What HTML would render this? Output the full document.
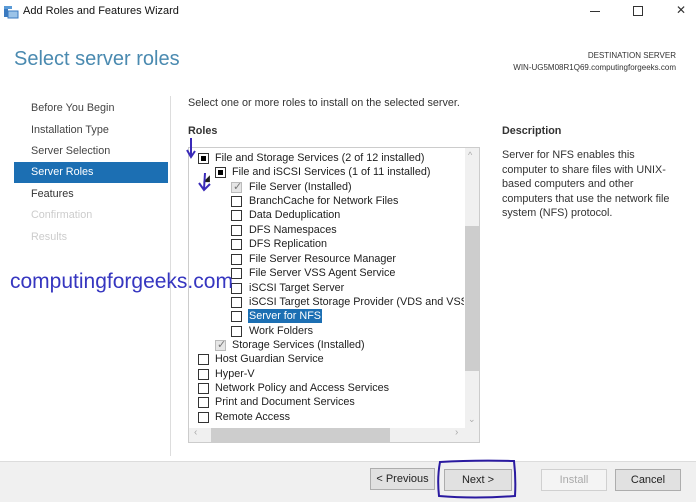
<!DOCTYPE html>
<html><head><style>
*{margin:0;padding:0;box-sizing:border-box}
body{width:696px;height:502px;background:#fff;font-family:"Liberation Sans",sans-serif;font-size:10.8px;color:#1e1e1e;position:relative;overflow:hidden}
.a{position:absolute;white-space:nowrap}
.cb{position:absolute;width:11px;height:11px;border:1px solid #333;background:#fff}
.cb.f::after{content:"";position:absolute;left:2px;top:2px;width:5px;height:5px;background:#000}
.cb.g{border-color:#bbb;background:#e6e6e6}
.cb.g::after{content:"\2713";position:absolute;left:1px;top:-3px;font-size:11px;color:#777}
.btn{position:absolute;height:22px;border:1px solid #adadad;background:#e1e1e1;text-align:center;line-height:20px;font-size:11px;color:#222}
</style></head><body>
<svg class="a" style="left:3px;top:5px" width="16" height="14"><rect x="1" y="1" width="4" height="11" fill="#3a7ac0"/><rect x="5" y="6" width="10" height="7" fill="#9bc3e8" stroke="#3a7ac0"/><rect x="1" y="1" width="8" height="3" fill="#5a9ad6"/></svg>
<div class="a" style="left:23px;top:5px;font-size:11px;color:#111">Add Roles and Features Wizard</div>
<div class="a" style="left:590px;top:11px;width:10px;height:1px;background:#333"></div>
<div class="a" style="left:633px;top:6px;width:10px;height:10px;border:1px solid #333"></div>
<div class="a" style="left:676px;top:3px;font-size:12px;color:#333">✕</div>
<div class="a" style="left:14px;top:48px;font-size:20px;color:#4a8ab0">Select server roles</div>
<div class="a" style="right:20px;top:50px;font-size:8px;color:#333;text-align:right;line-height:12px">DESTINATION SERVER<br>WIN-UG5M08R1Q69.computingforgeeks.com</div>
<div class="a" style="left:170px;top:96px;width:1px;height:360px;background:#ddd"></div>
<div class="a" style="left:31px;top:102px;color:#444">Before You Begin</div>
<div class="a" style="left:31px;top:124px;color:#444">Installation Type</div>
<div class="a" style="left:31px;top:145px;color:#444">Server Selection</div>
<div class="a" style="left:14px;top:162px;width:154px;height:21px;background:#1c6fb3"></div>
<div class="a" style="left:31px;top:166px;color:#fff">Server Roles</div>
<div class="a" style="left:31px;top:188px;color:#333">Features</div>
<div class="a" style="left:31px;top:209px;color:#ccc">Confirmation</div>
<div class="a" style="left:31px;top:231px;color:#ccc">Results</div>
<div class="a" style="left:188px;top:97px;color:#333">Select one or more roles to install on the selected server.</div>
<div class="a" style="left:188px;top:125px;font-weight:bold;color:#333">Roles</div>
<div class="a" style="left:188px;top:147px;width:292px;height:296px;border:1px solid #ccc"></div>
<div class="a" style="left:465px;top:148px;width:14px;height:280px;background:#f0f0f0"></div>
<div class="a" style="left:465px;top:226px;width:14px;height:145px;background:#cdcdcd"></div>
<div class="a" style="left:468px;top:150px;font-size:9px;color:#aaa">^</div>
<div class="a" style="left:468px;top:414px;font-size:9px;color:#aaa">⌄</div>
<div class="a" style="left:189px;top:428px;width:290px;height:14px;background:#f0f0f0"></div>
<div class="a" style="left:211px;top:428px;width:179px;height:14px;background:#cdcdcd"></div>
<div class="a" style="left:194px;top:427px;font-size:10px;color:#aaa">‹</div>
<div class="a" style="left:455px;top:427px;font-size:10px;color:#aaa">›</div>

<div class="cb f" style="left:198px;top:153px"></div><div class="a" style="left:215px;top:152px">File and Storage Services (2 of 12 installed)</div>
<div class="cb f" style="left:215px;top:167px"></div><div class="a" style="left:232px;top:166px">File and iSCSI Services (1 of 11 installed)</div>
<div class="cb g" style="left:231px;top:182px"></div><div class="a" style="left:249px;top:181px">File Server (Installed)</div>
<div class="cb" style="left:231px;top:196px"></div><div class="a" style="left:249px;top:195px">BranchCache for Network Files</div>
<div class="cb" style="left:231px;top:210px"></div><div class="a" style="left:249px;top:209px">Data Deduplication</div>
<div class="cb" style="left:231px;top:225px"></div><div class="a" style="left:249px;top:224px">DFS Namespaces</div>
<div class="cb" style="left:231px;top:239px"></div><div class="a" style="left:249px;top:238px">DFS Replication</div>
<div class="cb" style="left:231px;top:254px"></div><div class="a" style="left:249px;top:253px">File Server Resource Manager</div>
<div class="cb" style="left:231px;top:268px"></div><div class="a" style="left:249px;top:267px">File Server VSS Agent Service</div>
<div class="cb" style="left:231px;top:283px"></div><div class="a" style="left:249px;top:282px">iSCSI Target Server</div>
<div class="cb" style="left:231px;top:297px"></div><div class="a" style="left:249px;top:296px;width:215px;overflow:hidden">iSCSI Target Storage Provider (VDS and VSS h</div>
<div class="cb" style="left:231px;top:311px"></div><div class="a" style="left:248px;top:309px;background:#1c6fb3;color:#fff;padding:1px 1px">Server for NFS</div>
<div class="cb" style="left:231px;top:326px"></div><div class="a" style="left:249px;top:325px">Work Folders</div>
<div class="cb g" style="left:215px;top:340px"></div><div class="a" style="left:232px;top:339px">Storage Services (Installed)</div>
<div class="cb" style="left:198px;top:354px"></div><div class="a" style="left:215px;top:353px">Host Guardian Service</div>
<div class="cb" style="left:198px;top:369px"></div><div class="a" style="left:215px;top:368px">Hyper-V</div>
<div class="cb" style="left:198px;top:383px"></div><div class="a" style="left:215px;top:382px">Network Policy and Access Services</div>
<div class="cb" style="left:198px;top:397px"></div><div class="a" style="left:215px;top:396px">Print and Document Services</div>
<div class="cb" style="left:198px;top:412px"></div><div class="a" style="left:215px;top:411px">Remote Access</div>
<div class="a" style="left:203px;top:173px;font-size:9px">◢</div>
<svg class="a" style="left:184px;top:136px" width="40" height="60"><path d="M7 2 L7 20 M3 14 L7 21 L11 15" stroke="#3a2ab8" stroke-width="2" fill="none"/><path d="M21 37 L20 53 M15 47 L20 54 L26 48" stroke="#3a2ab8" stroke-width="2" fill="none"/></svg>
<div class="a" style="left:502px;top:125px;font-weight:bold;color:#333">Description</div>
<div class="a" style="left:502px;top:148px;line-height:14.5px;color:#333">Server for NFS enables this<br>computer to share files with UNIX-<br>based computers and other<br>computers that use the network file<br>system (NFS) protocol.</div>
<div class="a" style="left:10px;top:270px;font-size:21px;color:#3636c0">computingforgeeks.com</div>
<div class="a" style="left:0;top:461px;width:696px;height:41px;background:#f0f0f0;border-top:1px solid #dcdcdc"></div>
<div class="btn" style="left:370px;top:468px;width:65px">&lt; Previous</div>
<div class="btn" style="left:444px;top:469px;width:68px">Next &gt;</div>
<div class="btn" style="left:541px;top:469px;width:66px;background:#f4f4f4;border-color:#d0d0d0;color:#aaa">Install</div>
<div class="btn" style="left:615px;top:469px;width:66px">Cancel</div>
<svg class="a" style="left:434px;top:458px" width="86" height="42"><path d="M6 4 Q40 2 80 3 Q82 20 81 38 Q40 41 5 38 Q3 20 6 4 Z" stroke="#2a1aa0" stroke-width="2" fill="none"/></svg>
</body></html>
